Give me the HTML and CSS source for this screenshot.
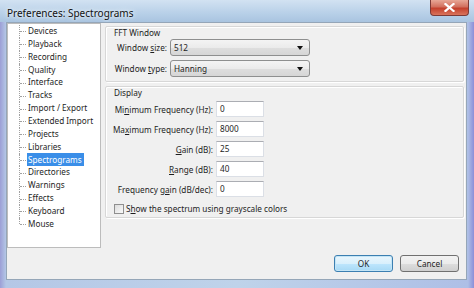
FILE: index.html
```html
<!DOCTYPE html>
<html lang="en">

<head>
    <meta charset="UTF-8">
    <meta name="viewport" content="width=device-width, initial-scale=1.0">
    <title>Preferences: Spectrograms</title>
    <link rel="stylesheet" href="styles.css">
</head>

<body>
    <div class="window">
        <div class="titlebar">
            <span class="title">Preferences: Spectrograms</span>
            <div class="close">
                <svg width="11" height="9" viewBox="0 0 11 9">
                    <path d="M1.5 1 L9.5 8 M9.5 1 L1.5 8" stroke="#fff" stroke-width="2.2" stroke-linecap="square" />
                </svg>
            </div>
        </div>
        <div class="client">
            <div class="main">
                <div class="tree">
                    <ul>
                        <li><span>Devices</span></li>
                        <li><span>Playback</span></li>
                        <li><span>Recording</span></li>
                        <li><span>Quality</span></li>
                        <li><span>Interface</span></li>
                        <li><span>Tracks</span></li>
                        <li><span>Import / Export</span></li>
                        <li><span>Extended Import</span></li>
                        <li><span>Projects</span></li>
                        <li><span>Libraries</span></li>
                        <li><span class="selected">Spectrograms</span></li>
                        <li><span>Directories</span></li>
                        <li><span>Warnings</span></li>
                        <li><span>Effects</span></li>
                        <li><span>Keyboard</span></li>
                        <li><span>Mouse</span></li>
                    </ul>
                </div>
                <div class="pane">
                    <div class="group fft">
                        <div class="groupTitle">FFT Window</div>
                        <div class="fields fftFields">
                            <label>Window <u>s</u>ize:</label>
                            <div class="combo">512<i class="arrow"></i></div>
                            <label>Window <u>t</u>ype:</label>
                            <div class="combo">Hanning<i class="arrow"></i></div>
                        </div>
                    </div>
                    <div class="group display">
                        <div class="groupTitle">Display</div>
                        <div class="fields displayFields">
                            <label>Mi<u>n</u>imum Frequency (Hz):</label>
                            <div class="textBox">0</div>
                            <label>Ma<u>x</u>imum Frequency (Hz):</label>
                            <div class="textBox">8000</div>
                            <label><u>G</u>ain (dB):</label>
                            <div class="textBox">25</div>
                            <label><u>R</u>ange (dB):</label>
                            <div class="textBox">40</div>
                            <label>Frequency g<u>a</u>in (dB/dec):</label>
                            <div class="textBox">0</div>
                        </div>
                        <div class="check">
                            <span class="box"></span>
                            <span>S<u>h</u>ow the spectrum using grayscale colors</span>
                        </div>
                    </div>
                </div>
            </div>
            <div class="buttons">
                <button class="btn ok">OK</button>
                <button class="btn">Cancel</button>
            </div>
        </div>
    </div>
</body>

</html>
```

FILE: styles.css
```css
body {
    margin: 0;
    width: 474px;
    height: 288px;
    overflow: hidden;
    font-family: "Noto Sans", "Open Sans", sans-serif;
    font-size: 8.2px;
    color: #1e1e1e;
    background: linear-gradient(to right, #9c9fd6 0px, #b4c7e6 6px, #bfd3ea 50%, #aebfe6 468px, #8c8fd8 474px);
}

u {
    text-decoration: underline;
    text-underline-offset: 1px;
}

.window {
    display: flex;
    flex-direction: column;
    height: 288px;
}

.titlebar {
    height: 22px;
    display: flex;
    justify-content: space-between;
    align-items: flex-start;
    background: linear-gradient(to bottom, #d2e2f2, #b8d0e8 60%, #a9c4e0);
}

.title {
    margin: 6px 0 0 7px;
    font-size: 10px;
    color: #111;
    text-shadow: 0 0 6px #eef5fc, 0 0 3px #eef5fc;
}

.close {
    width: 39px;
    height: 16px;
    margin-right: 5px;
    display: flex;
    justify-content: center;
    align-items: center;
    border: 1px solid #7d3a36;
    border-top: none;
    border-radius: 0 0 4px 4px;
    box-sizing: border-box;
    background: linear-gradient(to bottom, #e8a796, #d2705e 45%, #c4402c 55%, #d9745c);
}

.client {
    flex: 1;
    margin: 0 7px 8px 6px;
    border: 1px solid #95a6b8;
    background-color: #f0f0f0;
    display: flex;
    flex-direction: column;
}

.main {
    display: flex;
    height: 225px;
}

.tree {
    width: 94px;
    height: 225px;
    box-sizing: border-box;
    border: 1px solid #bcbcbc;
    background-color: white;
}

.tree ul {
    list-style: none;
    margin: 1px 0 0 11px;
    padding: 0;
}

.tree li {
    position: relative;
    height: 12.87px;
    line-height: 12.87px;
    padding-left: 8px;
    white-space: nowrap;
}

.tree li::before {
    content: "";
    position: absolute;
    left: 0;
    top: 0;
    bottom: 0;
    border-left: 1px dotted #a0a0a0;
}

.tree li:last-child::before {
    bottom: 50%;
}

.tree li::after {
    content: "";
    position: absolute;
    left: 1px;
    top: 50%;
    width: 6px;
    border-top: 1px dotted #a0a0a0;
}

.tree li span {
    padding: 0 1px;
}

.tree .selected {
    background-color: #3a8ee8;
    color: white;
    padding: 1px 2px 1px 1px;
}

.pane {
    flex: 1;
    margin: 0 2px 0 4px;
    display: flex;
    flex-direction: column;
}

.group {
    border: 1px solid #d7d7d7;
    box-shadow: inset 1px 1px 0 white, 1px 1px 0 white;
    border-radius: 2px;
    padding-left: 7px;
}

.fft {
    margin-top: 3px;
    height: 56px;
    box-sizing: border-box;
}

.display {
    margin-top: 4px;
    height: 132px;
    box-sizing: border-box;
}

.groupTitle {
    line-height: 11px;
    padding-left: 1px;
}

.fields {
    display: grid;
    column-gap: 3px;
    align-items: center;
}

.fields label {
    justify-self: end;
    white-space: nowrap;
}

.fftFields {
    grid-template-columns: 54px 140px;
    row-gap: 4px;
    margin-top: 1px;
}

.displayFields {
    grid-template-columns: 100px 48px;
    row-gap: 4px;
    margin-top: 3px;
}

.combo {
    position: relative;
    height: 17px;
    box-sizing: border-box;
    border: 1px solid #8e8f8f;
    border-radius: 3px;
    padding-left: 3px;
    line-height: 15px;
    background: linear-gradient(to bottom, #f4f4f4, #ebebeb 50%, #dedede 51%, #d6d6d6);
}

.arrow {
    position: absolute;
    right: 6px;
    top: 6px;
    border-left: 3px solid transparent;
    border-right: 3px solid transparent;
    border-top: 4px solid #111;
}

.textBox {
    height: 16px;
    box-sizing: border-box;
    border: 1px solid #dbdfe6;
    border-top-color: #abadb3;
    background-color: white;
    padding-left: 3px;
    line-height: 14px;
}

.check {
    display: flex;
    align-items: center;
    gap: 2px;
    margin-top: 6px;
    padding-left: 1px;
}

.check .box {
    width: 10px;
    height: 10px;
    box-sizing: border-box;
    border: 1px solid #8f8f8f;
    background: linear-gradient(135deg, #dcdcdc, #fafafa);
}

.buttons {
    display: flex;
    justify-content: flex-end;
    gap: 7px;
    margin: 7px 7px 0 0;
}

.btn {
    width: 59px;
    height: 17px;
    padding: 0;
    font-family: inherit;
    font-size: 8.2px;
    color: #1e1e1e;
    border: 1px solid #707070;
    border-radius: 3px;
    background: linear-gradient(to bottom, #f2f2f2, #ebebeb 50%, #dddddd 51%, #cfcfcf);
}

.ok {
    border-color: #3c7fb1;
    box-shadow: inset 0 0 0 1px #c4e5f6;
    background: linear-gradient(to bottom, #eaf6fd, #d9f0fc 50%, #bee6fd 51%, #a7d9f5);
}
```
